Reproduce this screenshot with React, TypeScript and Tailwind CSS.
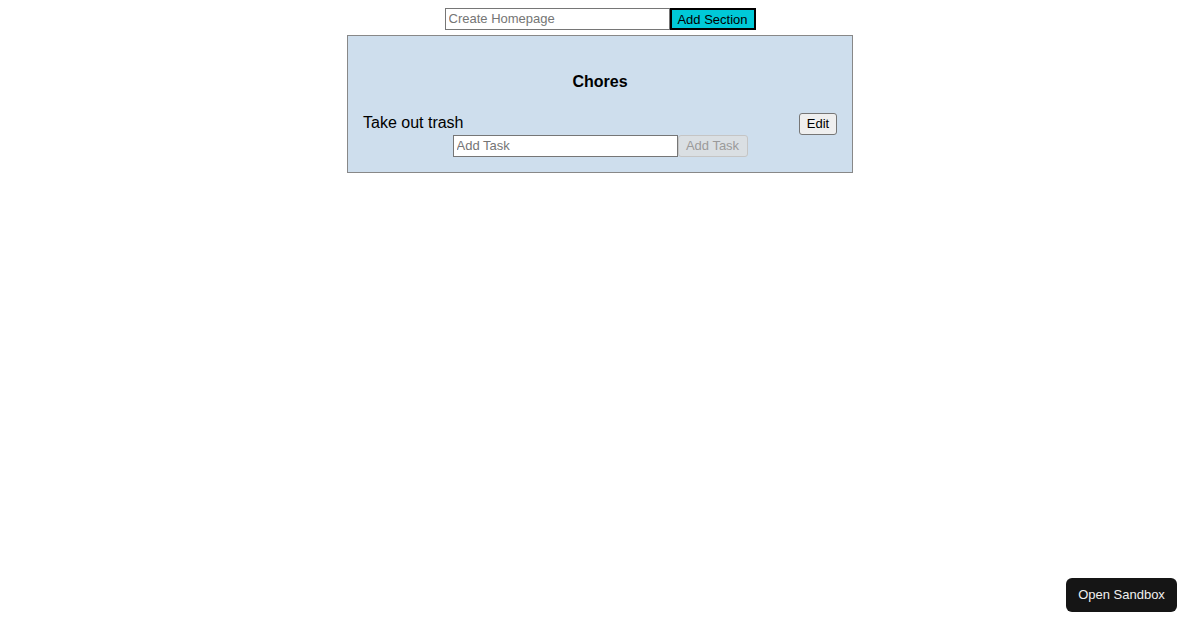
export default function App() {
  return (
    <div className="min-h-[630px] bg-white font-['Liberation_Sans',Arial,sans-serif] text-black">
      <div className="flex justify-center pt-2">
        <input
          placeholder="Create Homepage"
          className="h-[22px] w-[225px] border border-[#767676] px-[3px] pb-[1px] text-[13px] placeholder:text-[#757575] outline-none"
        />
        <button className="h-[22px] w-[86px] border-2 border-black bg-[#00c9d8] pb-[2px] text-[13px]">Add Section</button>
      </div>

      <div className="mx-auto mt-[5px] w-[506px] border border-[#888] bg-[#cedeed] pb-[15px] pt-[37px]">
        <h3 className="text-center text-base font-bold leading-[18px]">Chores</h3>
        <div className="mt-[22px] flex h-[22px] items-center justify-between pl-[15px] pr-[15px]">
          <span className="pb-[2px] text-base">Take out trash</span>
          <button className="h-[22px] w-[38px] rounded-[3px] border border-[#767676] bg-[#efefef] text-[13px]">Edit</button>
        </div>
        <div className="flex justify-center">
          <input
            placeholder="Add Task"
            className="h-[22px] w-[225px] border border-[#767676] bg-white px-[3px] pb-[1px] text-[13px] placeholder:text-[#757575] outline-none"
          />
          <button
            disabled
            className="h-[22px] w-[70px] rounded-[3px] border border-[#c5c5c5] bg-[#dadfe3] pb-[1px] text-[13px] text-[#9a9a9a]"
          >
            Add Task
          </button>
        </div>
      </div>

      <button className="absolute bottom-[18px] right-[23px] h-[34px] w-[111px] rounded-md bg-[#151515] text-[13px] text-[#f0f0f0]">
        Open Sandbox
      </button>
    </div>
  );
}
